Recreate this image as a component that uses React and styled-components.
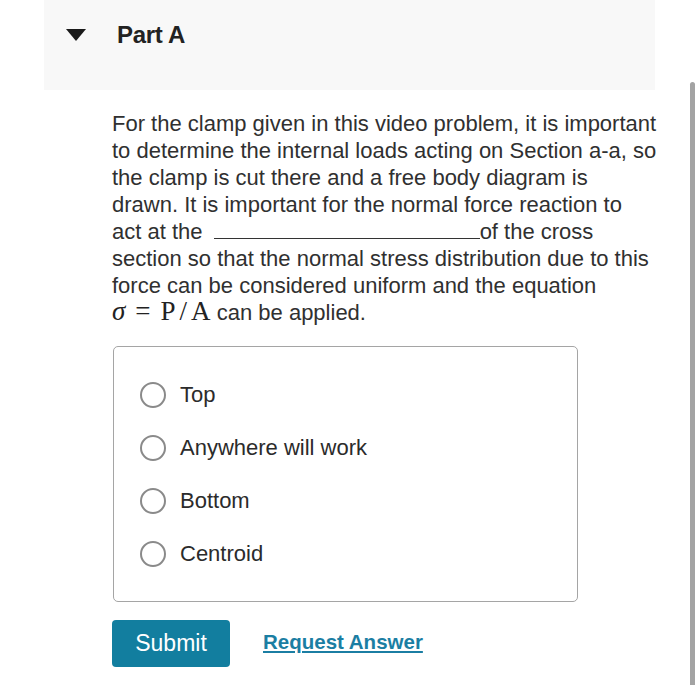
import React, { useState } from "react";
import styled, { createGlobalStyle } from "styled-components";

const GlobalStyle = createGlobalStyle`
  html, body {
    margin: 0;
    padding: 0;
    background: #ffffff;
    font-family: "Liberation Sans", Arial, sans-serif;
    color: #303030;
  }
`;

const options = ["Top", "Anywhere will work", "Bottom", "Centroid"];

const App = () => {
  const [choice, setChoice] = useState(null);

  return (
    <Page>
      <GlobalStyle />
      <Header>
        <Caret viewBox="0 0 20 12" aria-hidden="true">
          <polygon points="0,0 20,0 10,12" fill="#1a1a1a" />
        </Caret>
        <Title>Part A</Title>
      </Header>
      <Body>
        <Question>
          For the clamp given in this video problem, it is important
          <br />
          to determine the internal loads acting on Section a-a, so
          <br />
          the clamp is cut there and a free body diagram is
          <br />
          drawn. It is important for the normal force reaction to
          <br />
          act at the <Blank />of the cross
          <br />
          section so that the normal stress distribution due to this
          <br />
          force can be considered uniform and the equation
          <br />
          <Math>
            <i>σ</i>
            <Op>=</Op>P<Slash>/</Slash>A
          </Math>{" "}
          can be applied.
        </Question>
        <Choices>
          {options.map((opt) => (
            <Choice key={opt} onClick={() => setChoice(opt)}>
              <Radio $checked={choice === opt} />
              <Label>{opt}</Label>
            </Choice>
          ))}
        </Choices>
        <Actions>
          <SubmitButton>Submit</SubmitButton>
          <RequestLink href="#">Request Answer</RequestLink>
        </Actions>
      </Body>
      <Scrollbar />
    </Page>
  );
};

const Page = styled.div`
  position: relative;
  width: 700px;
  height: 685px;
  overflow: hidden;
`;

const Header = styled.div`
  display: flex;
  align-items: center;
  margin-left: 44px;
  width: 611px;
  height: 90px;
  padding: 0 0 20px 22px;
  box-sizing: border-box;
  background: #f8f8f8;
`;

const Caret = styled.svg`
  width: 20px;
  height: 12px;
  margin-right: 31px;
`;

const Title = styled.h2`
  margin: 0;
  font-size: 24px;
  font-weight: 700;
  color: #222222;
  letter-spacing: -0.3px;
`;

const Body = styled.div`
  padding: 20px 0 0 112px;
`;

const Question = styled.p`
  margin: 0;
  width: 570px;
  font-size: 22px;
  line-height: 27px;
  white-space: nowrap;
`;

const Blank = styled.span`
  display: inline-block;
  width: 266px;
  height: 20px;
  border-bottom: 1px solid #333333;
  vertical-align: baseline;
  margin-left: 5px;
`;

const Math = styled.span`
  font-family: "Liberation Serif", "Times New Roman", serif;
  font-size: 27px;
  line-height: 20px;
  color: #222222;
`;

const Op = styled.span`
  margin: 0 10px;
`;

const Slash = styled.span`
  margin: 0 4px;
`;

const Choices = styled.div`
  display: flex;
  flex-direction: column;
  box-sizing: border-box;
  width: 465px;
  margin: 20px 0 0 1px;
  padding: 21px 26px;
  border: 1px solid #a5a5a5;
  border-radius: 5px;
`;

const Choice = styled.label`
  display: flex;
  align-items: center;
  height: 53px;
  cursor: pointer;
`;

const Radio = styled.span`
  box-sizing: border-box;
  width: 26px;
  height: 26px;
  border-radius: 50%;
  border: 2px solid ${(p) => (p.$checked ? "#127ea0" : "#8a8a8a")};
  background: ${(p) => (p.$checked ? "radial-gradient(#127ea0 40%, #fff 45%)" : "#fff")};
  margin-right: 14px;
`;

const Label = styled.span`
  font-size: 22px;
  color: #2b2b2b;
`;

const Actions = styled.div`
  display: flex;
  align-items: center;
  gap: 33px;
  margin-top: 18px;
`;

const SubmitButton = styled.button`
  width: 118px;
  height: 47px;
  border: none;
  border-radius: 4px;
  background: #127e9f;
  color: #ffffff;
  font-family: "Liberation Sans", Arial, sans-serif;
  font-size: 23px;
  cursor: pointer;
`;

const RequestLink = styled.a`
  font-size: 20.5px;
  font-weight: 700;
  color: #1b7ea3;
  text-decoration: underline;
  margin-top: -4px;
`;

const Scrollbar = styled.div`
  position: absolute;
  left: 690px;
  top: 82px;
  width: 5px;
  height: 620px;
  border-radius: 3px;
  background: #a3a3a3;
`;

export default App;
